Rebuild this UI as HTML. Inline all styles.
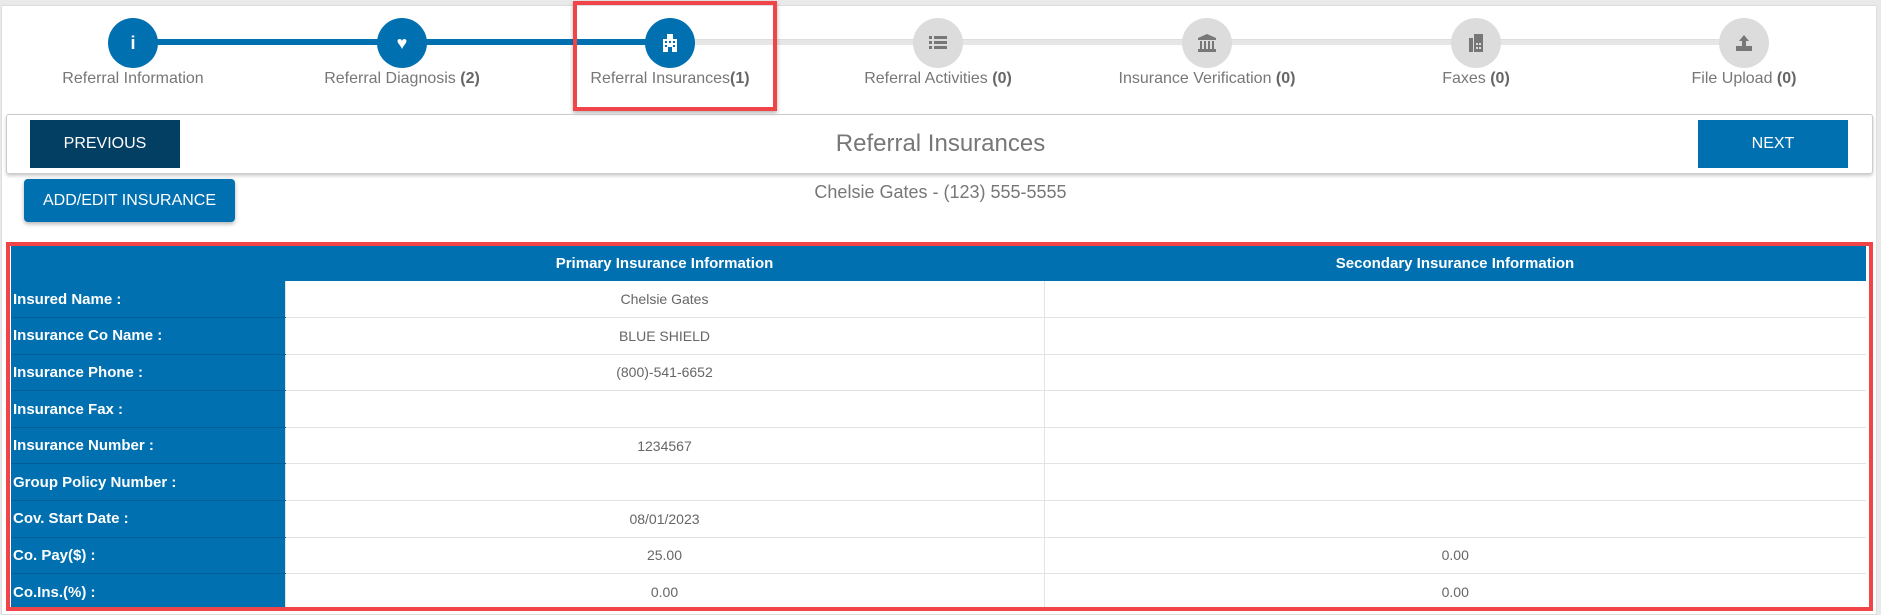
<!DOCTYPE html>
<html><head><meta charset="utf-8"><style>
*{box-sizing:border-box;margin:0;padding:0}
body{width:1881px;height:613px;background:#e9e9e9;font-family:"Liberation Sans",sans-serif;position:relative;overflow:hidden}
.card{position:absolute;left:1px;top:5px;width:1876px;height:610px;background:#fff;border:1px solid #ddd}
.abs{position:absolute}
.line{position:absolute;top:39px;height:6px}
.c{position:absolute;top:18px;width:50px;height:50px;border-radius:50%;margin-left:-25px;display:flex;align-items:center;justify-content:center;color:#fff;font-weight:bold;font-size:18px}
.blue{background:#0070b1}.gray{background:#dcdcdc;color:#777}
.lbl{position:absolute;top:70px;width:300px;margin-left:-150px;text-align:center;color:#777;font-size:16px}
.lbl b{color:#666}
.btn{position:absolute;color:#fff;font-size:16px;display:flex;align-items:center;justify-content:center}
table{border-collapse:collapse;width:1855px;table-layout:fixed}
td,th{height:36.6px;font-size:14px}
th{background:#0070b1;color:#fff;font-weight:bold;font-size:15px;height:35px}
td.l{background:#0070b1;color:#fff;font-weight:bold;font-size:15px;border-bottom:1px solid #005f97;padding-left:2px}
td.v{color:#666;text-align:center;border-bottom:1px solid #e3e3e3;border-left:1px solid #e3e3e3}
</style></head><body>
<div class="card"></div>
<div class="line" style="left:133px;width:537px;background:#0070b1"></div>
<div class="line" style="left:670px;width:1074px;background:#e6e6e6;border-top:1px solid #ddd"></div>
<div class="c blue" style="left:133px">i</div>
<div class="c blue" style="left:402px">♥</div>
<div class="c blue" style="left:670px"><svg width="16" height="18" viewBox="0 0 16 18"><rect x="1" y="5" width="14" height="13" fill="#fff"/><rect x="5" y="0" width="6" height="5" fill="#fff"/><g fill="#0070b1"><rect x="3" y="7" width="2" height="2"/><rect x="7" y="7" width="2" height="2"/><rect x="11" y="7" width="2" height="2"/><rect x="3" y="11" width="2" height="2"/><rect x="11" y="11" width="2" height="2"/><rect x="6" y="13" width="4" height="5"/></g></svg></div>
<div class="c gray" style="left:938px"><svg width="18" height="16"><g fill="#777"><rect x="0" y="1" width="3" height="3"/><rect x="5" y="1" width="13" height="3"/><rect x="0" y="6" width="3" height="3"/><rect x="5" y="6" width="13" height="3"/><rect x="0" y="11" width="3" height="3"/><rect x="5" y="11" width="13" height="3"/></g></svg></div>
<div class="c gray" style="left:1207px"><svg width="20" height="20"><g fill="#777"><path d="M10 1 L19 5 V7 H1 V5 Z"/><rect x="3" y="8" width="2" height="8"/><rect x="7" y="8" width="2" height="8"/><rect x="11" y="8" width="2" height="8"/><rect x="15" y="8" width="2" height="8"/><rect x="1" y="16" width="18" height="3"/></g></svg></div>
<div class="c gray" style="left:1476px"><svg width="14" height="18"><rect x="0" y="4" width="4" height="14" fill="#777"/><rect x="5" y="0" width="9" height="18" fill="#777"/><g fill="#dcdcdc"><rect x="7" y="9" width="2" height="2"/><rect x="10" y="9" width="2" height="2"/><rect x="7" y="13" width="2" height="2"/><rect x="10" y="13" width="2" height="2"/></g></svg></div>
<div class="c gray" style="left:1744px"><svg width="18" height="18"><path d="M9 1 L4 7 H7 V12 H11 V7 H14 Z" fill="#777"/><rect x="1" y="12" width="16" height="5" fill="#777"/></svg></div>
<div class="lbl" style="left:133px">Referral Information</div>
<div class="lbl" style="left:402px">Referral Diagnosis <b>(2)</b></div>
<div class="lbl" style="left:670px">Referral Insurances<b>(1)</b></div>
<div class="lbl" style="left:938px">Referral Activities <b>(0)</b></div>
<div class="lbl" style="left:1207px">Insurance Verification <b>(0)</b></div>
<div class="lbl" style="left:1476px">Faxes <b>(0)</b></div>
<div class="lbl" style="left:1744px">File Upload <b>(0)</b></div>
<div class="abs" style="left:573px;top:1px;width:204px;height:110px;border:4px solid #f04448;box-shadow:0 2px 4px rgba(0,0,0,.3)"></div>
<div class="abs" style="left:6px;top:114px;width:1867px;height:60px;border:1px solid #ccc;border-radius:3px;box-shadow:0 2px 3px rgba(0,0,0,.2)"></div>
<div class="btn" style="left:30px;top:120px;width:150px;height:48px;background:#033e63">PREVIOUS</div>
<div class="btn" style="left:1698px;top:120px;width:150px;height:48px;background:#0070b1">NEXT</div>
<div class="abs" style="left:0;width:1881px;top:130px;text-align:center;font-size:24px;color:#777">Referral Insurances</div>
<div class="btn" style="left:24px;top:179px;width:211px;height:43px;background:#0070b1;border-radius:4px;box-shadow:0 2px 4px rgba(0,0,0,.3)">ADD/EDIT INSURANCE</div>
<div class="abs" style="left:0;width:1881px;top:182px;text-align:center;font-size:18px;color:#777">Chelsie Gates - (123) 555-5555</div>
<div class="abs" style="left:6px;top:242px;width:1867px;height:369px;border:4px solid #f04448;overflow:hidden">
<table style="margin-left:1px"><colgroup><col style="width:274px"><col style="width:759px"><col></colgroup>
<tr><th></th><th>Primary Insurance Information</th><th>Secondary Insurance Information</th></tr>
<tr><td class="l">Insured Name :</td><td class="v">Chelsie Gates</td><td class="v"></td></tr>
<tr><td class="l">Insurance Co Name :</td><td class="v">BLUE SHIELD</td><td class="v"></td></tr>
<tr><td class="l">Insurance Phone :</td><td class="v">(800)-541-6652</td><td class="v"></td></tr>
<tr><td class="l">Insurance Fax :</td><td class="v"></td><td class="v"></td></tr>
<tr><td class="l">Insurance Number :</td><td class="v">1234567</td><td class="v"></td></tr>
<tr><td class="l">Group Policy Number :</td><td class="v"></td><td class="v"></td></tr>
<tr><td class="l">Cov. Start Date :</td><td class="v">08/01/2023</td><td class="v"></td></tr>
<tr><td class="l">Co. Pay($) :</td><td class="v">25.00</td><td class="v">0.00</td></tr>
<tr><td class="l">Co.Ins.(%) :</td><td class="v">0.00</td><td class="v">0.00</td></tr>
</table></div>
</body></html>
